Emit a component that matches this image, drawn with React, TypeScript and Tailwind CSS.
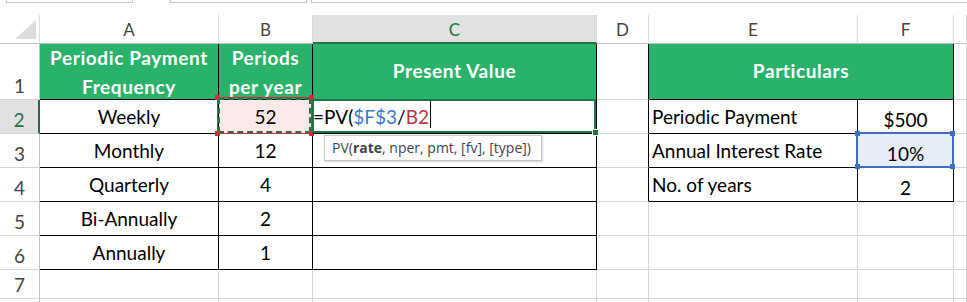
import React from "react";

const GR = "border-r border-b border-r-[#d4d4d4] border-b-[#d4d4d4]";
const TB = "border-r border-b border-black";
const RB = "border-r border-b border-r-black border-b-[#d4d4d4]";
const HD = "border-r border-b border-r-[#dadada] border-b-[#bfbfbf]";
const GREEN = "bg-[#2ab26b]";

function RowNum({ n, active }: { n: number; active?: boolean }) {
  if (active) {
    return (
      <div className="flex items-end justify-center pb-[2px] leading-[23px] text-[19px] text-[#217346] bg-[#e1e1e1] border-r-2 border-b border-r-[#217346] border-b-[#d4d4d4]">
        {n}
      </div>
    );
  }
  return (
    <div className="flex items-end justify-center pb-[2px] leading-[23px] text-[19px] text-[#444] border-r border-b border-r-[#bfbfbf] border-b-[#d4d4d4]">
      {n}
    </div>
  );
}

function Val({ cls, children, left }: { cls: string; children?: React.ReactNode; left?: boolean }) {
  return (
    <div className={`${cls} flex items-end pb-[5px] leading-[23px] text-[19px] ${left ? "justify-start pl-[3px]" : "justify-center"}`}>
      {children}
    </div>
  );
}

function Num({ cls, children }: { cls: string; children?: React.ReactNode }) {
  return (
    <div className={`${cls} flex items-end justify-center pb-[2px] leading-[23px] text-[19px]`}>
      {children}
    </div>
  );
}

function Handle({ pos, color }: { pos: string; color: string }) {
  return <div className={`absolute ${pos} w-[5px] h-[5px] ${color}`} />;
}

export default function App() {
  return (
    <div className="w-[967px] h-[302px] overflow-hidden bg-white font-['Lato',sans-serif] text-black">
      <div className="grid grid-cols-[40px_179px_94px_284px_52px_209px_96px_13px] grid-rows-[15px_29px_56px_34px_34px_34px_34px_34px_29px_3px]">
        {/* bottom edge of the formula bar */}
        <div className="col-span-8 flex items-start">
          <div className="ml-[6px] w-[127px] h-[3px] border-x border-b border-[#c6c6c6]" />
          <div className="ml-[37px] w-[137px] h-[3px] border-x border-b border-[#c6c6c6]" />
          <div className="ml-[4px] flex-1 h-[3px] border-l border-b border-[#c6c6c6]" />
        </div>

        {/* column headers */}
        <div className={`${HD} flex items-end justify-end pr-[3px] pb-[4px]`}>
          <svg width="21" height="19" viewBox="0 0 21 19">
            <polygon points="21,0 21,19 0,19" fill="#dcdcdc" />
          </svg>
        </div>
        {["A", "B"].map((l) => (
          <div key={l} className={`${HD} flex items-end justify-center pb-[3px] leading-[20px] text-[17px] text-[#444]`}>
            {l}
          </div>
        ))}
        <div className="flex items-end justify-center pb-[2px] leading-[20px] text-[17px] text-[#217346] bg-[#e1e1e1] border-r border-b-2 border-r-[#dadada] border-b-[#217346]">
          C
        </div>
        {["D", "E", "F", ""].map((l) => (
          <div key={l} className={`${HD} flex items-end justify-center pb-[3px] leading-[20px] text-[17px] text-[#444]`}>
            {l}
          </div>
        ))}

        {/* row 1 */}
        <RowNum n={1} />
        <div className={`${TB} ${GREEN} flex items-end justify-center`}>
          <div className="mb-[-2px] text-center leading-[29px] text-[19px] font-bold tracking-[0.6px] text-white">
            Periodic Payment
            <br />
            Frequency
          </div>
        </div>
        <div className={`${TB} ${GREEN} flex items-end justify-center`}>
          <div className="mb-[-2px] text-center leading-[29px] text-[19px] font-bold tracking-[0.6px] text-white">
            Periods
            <br />
            per year
          </div>
        </div>
        <div className={`${TB} ${GREEN} flex items-center justify-center text-[19px] font-bold tracking-[0.6px] text-white`}>
          Present Value
        </div>
        <div className={RB} />
        <div className={`${TB} ${GREEN} col-span-2 flex items-center justify-center text-[19px] font-bold tracking-[0.6px] text-white`}>
          Particulars
        </div>
        <div className={GR} />

        {/* row 2 */}
        <RowNum n={2} active />
        <Val cls={TB}>Weekly</Val>
        <div className={`${TB} relative flex items-end justify-center pb-[5px] leading-[23px] text-[19px] bg-[#fbe9e9]`}>
          <div className="absolute -left-[2px] -top-[3px] right-0 -bottom-[1px] border border-[#c4313b]">
            <div className="absolute inset-0 border-2 border-dashed border-[#217346]" />
            <Handle pos="-left-[3px] -top-[3px]" color="bg-[#c4313b]" />
            <Handle pos="-right-[3px] -top-[3px]" color="bg-[#c4313b]" />
            <Handle pos="-left-[3px] -bottom-[3px]" color="bg-[#c4313b]" />
            <Handle pos="-right-[3px] -bottom-[3px]" color="bg-[#c4313b]" />
          </div>
          <span className="relative">52</span>
        </div>
        <div className={`${TB} relative z-10 flex items-end pb-[4px] leading-[24px] text-[19px]`}>
          <div className="absolute -left-px -top-px right-0 bottom-0 border-2 border-[#217346]" />
          <div className="absolute -right-[2px] -bottom-[2px] w-[5px] h-[5px] bg-[#217346] outline outline-1 outline-white" />
          <span>=PV(</span>
          <span className="text-[#3c78d2]">$F$3</span>
          <span>/</span>
          <span className="text-[#c4313b]">B2</span>
          <span className="ml-[1px] self-start w-px h-[28px] bg-black" />
          <div className="absolute left-[11px] top-[35px] w-[218px] h-[26px] flex items-center pl-[7px] bg-white border border-[#c6c6c6] shadow-[1px_1px_2px_rgba(0,0,0,0.18)] font-['Open_Sans',sans-serif] text-[14px] text-[#444] whitespace-nowrap">
            PV(<b className="font-bold">rate</b>, nper, pmt, [fv], [type])
          </div>
        </div>
        <div className={RB} />
        <Val cls={TB} left>Periodic Payment</Val>
        <Num cls={TB}>$500</Num>
        <div className={GR} />

        {/* row 3 */}
        <RowNum n={3} />
        <Val cls={TB}>Monthly</Val>
        <Val cls={TB}>12</Val>
        <div className={TB} />
        <div className={RB} />
        <Val cls={TB} left>Annual Interest Rate</Val>
        <div className={`${TB} relative flex items-end justify-center pb-[2px] leading-[23px] text-[19px] bg-[#e8eef8]`}>
          <div className="absolute -left-[2px] -top-[2px] -right-[1px] -bottom-[1px] border-2 border-[#3d6fc4]">
            <Handle pos="-left-[3px] -top-[3px]" color="bg-[#3d6fc4]" />
            <Handle pos="-right-[3px] -top-[3px]" color="bg-[#3d6fc4]" />
            <Handle pos="-left-[3px] -bottom-[3px]" color="bg-[#3d6fc4]" />
            <Handle pos="-right-[3px] -bottom-[3px]" color="bg-[#3d6fc4]" />
          </div>
          <span className="relative">10%</span>
        </div>
        <div className={GR} />

        {/* row 4 */}
        <RowNum n={4} />
        <Val cls={TB}>Quarterly</Val>
        <Val cls={TB}>4</Val>
        <div className={TB} />
        <div className={RB} />
        <Val cls={TB} left>No. of years</Val>
        <Num cls={TB}>2</Num>
        <div className={GR} />

        {/* row 5 */}
        <RowNum n={5} />
        <Val cls={TB}>Bi-Annually</Val>
        <Val cls={TB}>2</Val>
        <div className={TB} />
        <div className={GR} />
        <div className={GR} />
        <div className={GR} />
        <div className={GR} />

        {/* row 6 */}
        <RowNum n={6} />
        <Val cls={TB}>Annually</Val>
        <Val cls={TB}>1</Val>
        <div className={TB} />
        <div className={GR} />
        <div className={GR} />
        <div className={GR} />
        <div className={GR} />

        {/* row 7 */}
        <RowNum n={7} />
        {[0, 1, 2, 3, 4, 5, 6].map((i) => (
          <div key={i} className={GR} />
        ))}

        {/* row 8 (cut off) */}
        <div className="border-r border-r-[#bfbfbf]" />
        {[0, 1, 2, 3, 4, 5, 6].map((i) => (
          <div key={i} className="border-r border-r-[#d4d4d4]" />
        ))}
      </div>
    </div>
  );
}
